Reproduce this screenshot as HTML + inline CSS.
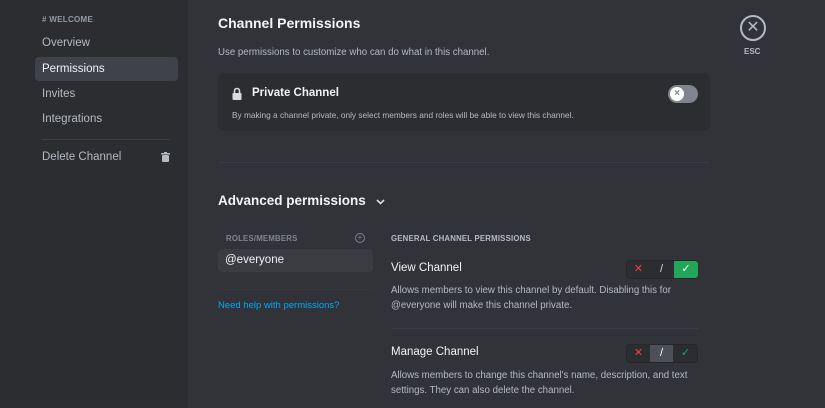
<!DOCTYPE html>
<html><head><style>
*{margin:0;padding:0;box-sizing:border-box}
body{width:825px;height:408px;overflow:hidden;background:#313338;font-family:"Liberation Sans",sans-serif;position:relative;color:#dbdee1}
.a{position:absolute;white-space:nowrap}
.side{position:absolute;left:0;top:0;width:188px;height:408px;background:#2b2d31}
.nav{position:absolute;left:35px;width:143px;height:24px;line-height:24px;padding-left:7px;font-size:11.5px;color:#b5bac1;border-radius:4px}
.tg{position:absolute;left:626px;width:72px;height:19px;border-radius:4px;background:#2b2d31;border:1px solid #26272b}
.tg span{position:absolute;top:0;width:23px;height:17px;text-align:center;line-height:17px;font-size:11px}
.d{color:#b5bac1;font-size:9.7px;line-height:15px}
</style></head><body>
<div class="side">
<div class="a" style="left:42px;top:15px;font-size:8px;font-weight:bold;color:#949ba4;letter-spacing:.3px"># WELCOME</div>
<div class="nav" style="top:31px">Overview</div>
<div class="nav" style="top:57px;background:#404249;color:#f2f3f5">Permissions</div>
<div class="nav" style="top:82px">Invites</div>
<div class="nav" style="top:107px">Integrations</div>
<div class="a" style="left:42px;top:139px;width:128px;height:1px;background:#3b3d44"></div>
<div class="nav" style="top:145px">Delete Channel</div>
<svg class="a" style="left:161px;top:152px" width="9" height="10" viewBox="0 0 9 10"><rect x="0" y="1" width="9" height="1.5" fill="#b5bac1"/><rect x="3" y="0" width="3" height="1.5" fill="#b5bac1"/><rect x="1" y="3" width="7" height="7" rx="1" fill="#b5bac1"/></svg>
</div>
<div class="a" style="left:218px;top:15px;font-size:14px;font-weight:bold;color:#f2f3f5">Channel Permissions</div>
<div class="a" style="left:218px;top:47px;font-size:9.7px;color:#b5bac1">Use permissions to customize who can do what in this channel.</div>
<div class="a" style="left:218px;top:73px;width:492px;height:58px;background:#2b2d31;border-radius:6px"></div>
<svg class="a" style="left:232px;top:87px" width="10" height="13" viewBox="0 0 10 13"><path d="M2.5 6V4a2.5 2.5 0 0 1 5 0v2" stroke="#dbdee1" stroke-width="1.6" fill="none"/><rect x="0.5" y="6" width="9" height="7" rx="1" fill="#dbdee1"/></svg>
<div class="a" style="left:252px;top:87px;font-size:11.5px;font-weight:bold;color:#f2f3f5">Private Channel</div>
<div class="a" style="left:232px;top:110px;font-size:8.3px;color:#b5bac1">By making a channel private, only select members and roles will be able to view this channel.</div>
<div class="a" style="left:668px;top:85px;width:30px;height:18px;border-radius:9px;background:#80848e"></div>
<div class="a" style="left:670px;top:87px;width:14px;height:14px;border-radius:7px;background:#fff;color:#80848e;font-size:10px;line-height:14px;text-align:center;font-weight:bold">×</div>
<div class="a" style="left:218px;top:162px;width:492px;height:1px;background:#3b3d44"></div>
<div class="a" style="left:218px;top:193px;font-size:13.5px;font-weight:bold;color:#f2f3f5">Advanced permissions</div>
<svg class="a" style="left:376px;top:199px" width="9" height="6" viewBox="0 0 9 6"><path d="M1 1l3.5 3.5L8 1" stroke="#dbdee1" stroke-width="1.6" fill="none"/></svg>
<div class="a" style="left:226px;top:234px;font-size:7.8px;font-weight:bold;color:#80848e;letter-spacing:.2px">ROLES/MEMBERS</div>
<div class="a" style="left:355px;top:233px;width:10px;height:10px;border:1.2px solid #80848e;border-radius:50%;font-size:8px;line-height:8px;text-align:center;color:#80848e">+</div>
<div class="a" style="left:218px;top:249px;width:155px;height:23px;background:#3a3c42;border-radius:4px;padding-left:7px;line-height:23px;font-size:11.5px;color:#f2f3f5">@everyone</div>
<div class="a" style="left:218px;top:289px;width:155px;height:1px;background:#35373c"></div>
<div class="a" style="left:218px;top:300px;font-size:9.5px;color:#00a8fc">Need help with permissions?</div>
<div class="a" style="left:391px;top:234px;font-size:7.8px;font-weight:bold;color:#b5bac1;letter-spacing:.2px">GENERAL CHANNEL PERMISSIONS</div>
<div class="a" style="left:391px;top:262px;font-size:11.5px;color:#f2f3f5">View Channel</div>
<div class="a d" style="left:391px;top:283px">Allows members to view this channel by default. Disabling this for<br>@everyone will make this channel private.</div>
<div class="tg" style="top:260px"><span style="left:0;color:#f23f43">✕</span><span style="left:23px;color:#dbdee1">/</span><span style="left:47px;width:24px;background:#23a55a;color:#fff;border-radius:0 3px 3px 0">✓</span></div>
<div class="a" style="left:391px;top:328px;width:307px;height:1px;background:#3b3d44"></div>
<div class="a" style="left:391px;top:346px;font-size:11.5px;color:#f2f3f5">Manage Channel</div>
<div class="a d" style="left:391px;top:368px">Allows members to change this channel's name, description, and text<br>settings. They can also delete the channel.</div>
<div class="tg" style="top:344px"><span style="left:0;color:#f23f43">✕</span><span style="left:23px;background:#4e5058;color:#fff">/</span><span style="left:47px;color:#23a55a">✓</span></div>
<div class="a" style="left:740px;top:15px;width:26px;height:26px;border:2px solid #b5bac1;border-radius:50%;text-align:center;line-height:22px;font-size:16px;color:#b5bac1">✕</div>
<div class="a" style="left:744px;top:47px;font-size:8px;font-weight:bold;color:#b5bac1">ESC</div>
</body></html>
